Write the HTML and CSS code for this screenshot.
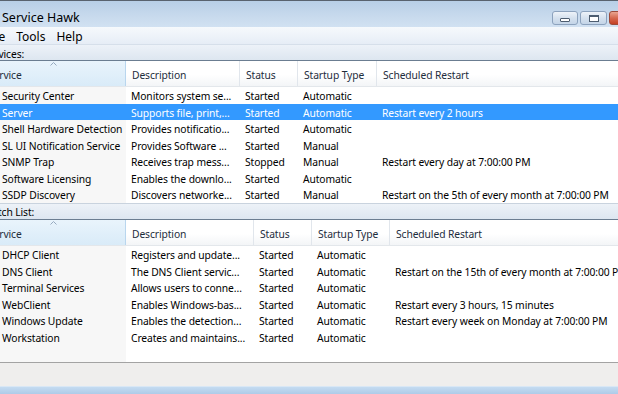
FILE: index.html
```html
<!DOCTYPE html>
<html lang="en">
<head>
  <meta charset="UTF-8">
  <title>Service Hawk</title>
  <link rel="stylesheet" href="styles.css">
</head>
<body>
  <div class="window">
    <div class="titlebar">
      <span class="title">Service Hawk</span>
      <div class="caption">
        <div class="cap-btn cap-min"><span class="glyph-min"></span></div>
        <div class="cap-btn cap-max"><span class="glyph-max"></span></div>
        <div class="cap-btn cap-close"></div>
      </div>
    </div>

    <div class="menubar">
      <span>File</span>
      <span>Tools</span>
      <span>Help</span>
    </div>

    <div class="section-label">Services:</div>
    <div class="list list-services">
      <div class="row head">
        <div class="cell sorted">Service<svg class="sort-arrow" width="7" height="4" viewBox="0 0 7 4"><path d="M0.5 3.5 L3.5 0.5 L6.5 3.5" fill="none" stroke="#97abc0" stroke-width="1"/></svg></div>
        <div class="cell">Description</div>
        <div class="cell">Status</div>
        <div class="cell">Startup Type</div>
        <div class="cell">Scheduled Restart</div>
      </div>
      <div class="body">
        <div class="row"><div class="cell">Security Center</div><div class="cell">Monitors system se...</div><div class="cell">Started</div><div class="cell">Automatic</div><div class="cell"></div></div>
        <div class="row selected"><div class="cell">Server</div><div class="cell">Supports file, print,...</div><div class="cell">Started</div><div class="cell">Automatic</div><div class="cell">Restart every 2 hours</div></div>
        <div class="row"><div class="cell">Shell Hardware Detection</div><div class="cell">Provides notificatio...</div><div class="cell">Started</div><div class="cell">Automatic</div><div class="cell"></div></div>
        <div class="row"><div class="cell">SL UI Notification Service</div><div class="cell">Provides Software ...</div><div class="cell">Started</div><div class="cell">Manual</div><div class="cell"></div></div>
        <div class="row"><div class="cell">SNMP Trap</div><div class="cell">Receives trap mess...</div><div class="cell">Stopped</div><div class="cell">Manual</div><div class="cell">Restart every day at 7:00:00 PM</div></div>
        <div class="row"><div class="cell">Software Licensing</div><div class="cell">Enables the downlo...</div><div class="cell">Started</div><div class="cell">Automatic</div><div class="cell"></div></div>
        <div class="row"><div class="cell">SSDP Discovery</div><div class="cell">Discovers networke...</div><div class="cell">Started</div><div class="cell">Manual</div><div class="cell">Restart on the 5th of every month at 7:00:00 PM</div></div>
      </div>
    </div>

    <div class="section-label watch-label">Watch List:</div>
    <div class="list list-watch">
      <div class="row head">
        <div class="cell sorted">Service<svg class="sort-arrow" width="7" height="4" viewBox="0 0 7 4"><path d="M0.5 3.5 L3.5 0.5 L6.5 3.5" fill="none" stroke="#97abc0" stroke-width="1"/></svg></div>
        <div class="cell">Description</div>
        <div class="cell">Status</div>
        <div class="cell">Startup Type</div>
        <div class="cell">Scheduled Restart</div>
      </div>
      <div class="body">
        <div class="row"><div class="cell">DHCP Client</div><div class="cell">Registers and update...</div><div class="cell">Started</div><div class="cell">Automatic</div><div class="cell"></div></div>
        <div class="row"><div class="cell">DNS Client</div><div class="cell">The DNS Client servic...</div><div class="cell">Started</div><div class="cell">Automatic</div><div class="cell">Restart on the 15th of every month at 7:00:00 PM</div></div>
        <div class="row"><div class="cell">Terminal Services</div><div class="cell">Allows users to conne...</div><div class="cell">Started</div><div class="cell">Automatic</div><div class="cell"></div></div>
        <div class="row"><div class="cell">WebClient</div><div class="cell">Enables Windows-bas...</div><div class="cell">Started</div><div class="cell">Automatic</div><div class="cell">Restart every 3 hours, 15 minutes</div></div>
        <div class="row"><div class="cell">Windows Update</div><div class="cell">Enables the detection...</div><div class="cell">Started</div><div class="cell">Automatic</div><div class="cell">Restart every week on Monday at 7:00:00 PM</div></div>
        <div class="row"><div class="cell">Workstation</div><div class="cell">Creates and maintains...</div><div class="cell">Started</div><div class="cell">Automatic</div><div class="cell"></div></div>
      </div>
    </div>

    <div class="statusbar"></div>
    <div class="taskbar"></div>
  </div>
</body>
</html>
```

FILE: styles.css
```css
/* Basic Reset */
* { box-sizing: border-box; margin: 0; padding: 0; }

body {
  width: 618px;
  height: 394px;
  overflow: hidden;
  font-family: "Noto Sans", "Open Sans", sans-serif;
  font-size: 10.3px;
  letter-spacing: -0.1px;
  color: #000;
  background: #fff;
}

/* Window frame, left edge runs off screen */
.window {
  width: 700px;
  height: 394px;
  margin-left: -18px;
  display: flex;
  flex-direction: column;
}

/* Title bar */
.titlebar {
  height: 27px;
  flex: none;
  display: flex;
  align-items: flex-start;
  padding: 0 30px 0 20px;
  border-top: 1px solid #59636f;
  background: linear-gradient(#b8cfe7, #c8daed 60%, #d1e1f2);
}
.title {
  font-size: 12.5px;
  letter-spacing: 0;
  line-height: 15px;
  padding-top: 9px;
  color: #000;
}
.caption {
  margin-left: auto;
  margin-top: 10px;
  display: flex;
  gap: 2px;
}
.cap-btn {
  height: 14px;
  border: 1px solid #8ca2bd;
  border-radius: 3px;
  background: linear-gradient(#eef3f9, #d5e1ee 50%, #c4d5e8);
  display: flex;
  justify-content: center;
  align-items: center;
}
.cap-min { width: 26px; }
.cap-max { width: 27px; }
.cap-close {
  width: 43px;
  border-color: #9b4b3b;
  background: linear-gradient(#e9a590, #d6694f 50%, #c43f24);
}
.glyph-min {
  width: 10px;
  height: 4px;
  margin-top: 3px;
  background: #fff;
  border: 1px solid #4d5d70;
  border-radius: 1px;
}
.glyph-max {
  width: 10px;
  height: 7px;
  background: #fff;
  border: 1px solid #4d5d70;
  border-top-width: 2px;
}

/* Menu */
.menubar {
  height: 18px;
  flex: none;
  display: flex;
  align-items: center;
  gap: 11px;
  padding-left: 4px;
  padding-top: 1px;
  font-size: 12px;
  letter-spacing: 0;
  background: linear-gradient(#f6f9fc, #e6edf6);
  border-bottom: 1px solid #d6dfea;
}

/* Section labels */
.section-label {
  height: 16px;
  flex: none;
  line-height: 18px;
  padding-left: 1px;
  background: linear-gradient(#edf2f8, #dde6f0);
  border-bottom: 1px solid #6b7d91;
}
.watch-label {
  height: 17.5px;
  line-height: 17px;
  border-top: 1px solid #c9d3de;
}

/* List views */
.list { flex: none; }
.list-watch {
  flex: 1;
  display: flex;
  flex-direction: column;
  border-bottom: 1px solid #a3a3a3;
}
.list-services .row { grid-template-columns: 144px 114px 58px 79px 1fr; }
.list-watch .row { grid-template-columns: 144px 128px 58px 78px 1fr; }

.row {
  display: grid;
  height: 16.5px;
  line-height: 18px;
  white-space: nowrap;
}
.cell {
  overflow: hidden;
  padding-left: 5px;
}
.body .cell:first-child { padding-left: 20px; }

.body {
  background: linear-gradient(to right, #f7f7f7 144px, #fff 144px);
}
.list-watch .body { flex: 1; }

.row.selected {
  background: #3399ff;
  color: #fff;
}

/* Column headers */
.row.head {
  height: 26px;
  line-height: 28px;
  color: #1e2d3d;
  background: linear-gradient(#fff 55%, #f3f5f7);
  border-bottom: 1px solid #e3e7eb;
}
.head .cell {
  border-right: 1px solid #e1e6ec;
  padding-left: 6px;
}
.head .cell:last-child { border-right: none; }
.head .sorted {
  position: relative;
  background: linear-gradient(#e9f4fc, #d9ebf8);
  border-right: 1px solid #b9d6ee;
}
.sort-arrow {
  position: absolute;
  top: 1px;
  left: 50%;
  margin-left: -4px;
}

/* Status bar and taskbar strip */
.statusbar {
  height: 23px;
  flex: none;
  background: #efeeed;
}
.taskbar {
  height: 8px;
  flex: none;
  border-top: 1px solid #d9e7f5;
  background: linear-gradient(#c4dbf1, #aecbe8);
}
```
